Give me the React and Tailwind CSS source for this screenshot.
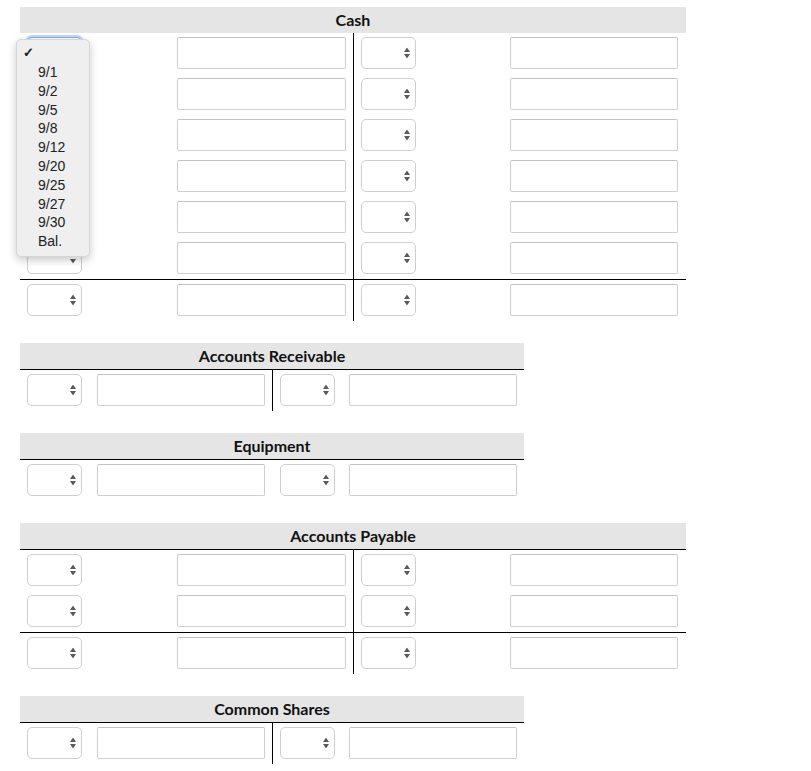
import React from "react";

const Arrows = () => (
  <svg
    className="absolute right-[5px] top-1/2 -translate-y-1/2"
    width="6"
    height="11"
    viewBox="0 0 6 11"
  >
    <polygon points="0,4.5 3,0 6,4.5" fill="#5a5a5a" />
    <polygon points="0,6.5 6,6.5 3,11" fill="#5a5a5a" />
  </svg>
);

const Select = ({ focused }) => (
  <div
    className={
      focused
        ? "relative h-[32px] w-[55px] rounded-[5px] border border-[#7fb0ee] bg-white shadow-[0_0_0_2px_rgba(120,170,240,0.45)]"
        : "relative h-[32px] w-[55px] rounded-[5px] border border-[#cfcfcf] bg-white"
    }
  >
    <Arrows />
  </div>
);

const Input = ({ w }) => (
  <input
    type="text"
    readOnly
    className={`h-[32px] ${w} rounded-[2px] border border-[#cfcfcf] border-t-[#c2c2c2] bg-white outline-none`}
  />
);

function Row({ wide, line, focused }) {
  return (
    <div className="flex h-[41px]">
      <div
        className={`flex items-start justify-between pt-[4px] px-[7px] border-r ${
          line ? "border-black" : "border-transparent"
        } ${wide ? "w-[334px]" : "w-[253px]"}`}
      >
        <Select focused={focused} />
        <Input w={wide ? "w-[169px]" : "w-[168px]"} />
      </div>
      <div
        className={`flex flex-1 items-start justify-between pt-[4px] pl-[7px] ${
          wide ? "pr-[8px]" : "pr-[7px]"
        }`}
      >
        <Select />
        <Input w="w-[168px]" />
      </div>
    </div>
  );
}

function TAccount({ title, wide, before, after = 0, line = true, headerLine = true, focusFirst }) {
  return (
    <div className={wide ? "w-[666px]" : "w-[504px]"}>
      <div
        className={`flex items-center justify-center bg-[#e5e5e5] text-[16px] font-bold leading-none text-[#111] ${
          headerLine ? "h-[27px] border-b border-black" : "h-[26px]"
        }`}
      >
        {title}
      </div>
      {Array.from({ length: before }).map((_, i) => (
        <Row key={"b" + i} wide={wide} line={line} focused={focusFirst && i === 0} />
      ))}
      {after > 0 && <div className="h-px bg-black" />}
      {Array.from({ length: after }).map((_, i) => (
        <Row key={"a" + i} wide={wide} line={line} />
      ))}
    </div>
  );
}

const items = ["9/1", "9/2", "9/5", "9/8", "9/12", "9/20", "9/25", "9/27", "9/30", "Bal."];

export default function App() {
  return (
    <div
      className="relative h-[771px] w-[811px] overflow-hidden bg-white pt-[7px] pl-[20px]"
      style={{ fontFamily: "Lato, 'Liberation Sans', sans-serif" }}
    >
      <div className="flex flex-col gap-[22px]">
        <TAccount title="Cash" wide before={6} after={1} headerLine={false} focusFirst />
        <TAccount title="Accounts Receivable" before={1} />
        <TAccount title="Equipment" before={1} line={false} />
        <TAccount title="Accounts Payable" wide before={2} after={1} />
        <TAccount title="Common Shares" before={1} />
      </div>

      <div
        className="absolute left-[16px] top-[39px] w-[74px] rounded-[5px] border border-[#d6d6d6] bg-[#efefef] pt-[4px] pb-[5px] text-[14px] text-[#222] shadow-[0_3px_8px_rgba(0,0,0,0.22)]"
        style={{ fontFamily: "'Liberation Sans', Arial, sans-serif" }}
      >
        <div className="relative h-[19px] leading-[19px]">
          <span className="absolute left-[6px] top-[-1px] text-[13px] font-bold">✓</span>
        </div>
        {items.map((t) => (
          <div key={t} className="h-[18.8px] pl-[21px] leading-[19px]">
            {t}
          </div>
        ))}
      </div>
    </div>
  );
}
